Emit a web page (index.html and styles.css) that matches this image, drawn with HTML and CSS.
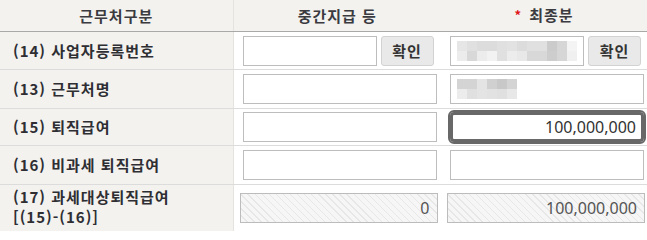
FILE: index.html
```html
<!DOCTYPE html>
<html lang="ko">
<head>
<meta charset="utf-8">
<link rel="stylesheet" href="styles.css">
</head>
<body>
<table class="grid">
  <colgroup><col class="c1"><col class="c2"><col class="c3"></colgroup>
  <thead>
    <tr class="head">
      <th class="lab">근무처구분</th>
      <th>중간지급 등</th>
      <th><span class="req">*</span> 최종분</th>
    </tr>
  </thead>
  <tbody>
    <tr class="r1">
      <td class="lab">(14) 사업자등록번호</td>
      <td class="cell"><div class="pair"><input class="fld short" type="text"><button class="btn" type="button">확인</button></div></td>
      <td class="cell"><div class="pair"><div class="fld short mosaic-box">
        <svg class="mosaic" width="120" height="20" viewBox="0 0 120 20">
          <rect x="0" y="0" width="10" height="10" fill="#e6e6e6"/><rect x="10" y="0" width="10" height="10" fill="#e0e0e0"/><rect x="20" y="0" width="10" height="10" fill="#dcdcdc"/><rect x="30" y="0" width="10" height="10" fill="#dcdcdc"/><rect x="40" y="0" width="10" height="10" fill="#e0e0e0"/><rect x="50" y="0" width="10" height="10" fill="#e2e2e2"/><rect x="60" y="0" width="10" height="10" fill="#dcdcdc"/><rect x="70" y="0" width="10" height="10" fill="#e0e0e0"/><rect x="80" y="0" width="10" height="10" fill="#e0e0e0"/><rect x="90" y="0" width="10" height="10" fill="#cbcbcb"/><rect x="100" y="0" width="10" height="10" fill="#d6d6d6"/><rect x="110" y="0" width="10" height="10" fill="#f4f4f4"/>
          <rect x="0" y="10" width="10" height="10" fill="#ececec"/><rect x="10" y="10" width="10" height="10" fill="#d8d8d8"/><rect x="20" y="10" width="10" height="10" fill="#ececec"/><rect x="30" y="10" width="10" height="10" fill="#f2f2f2"/><rect x="40" y="10" width="10" height="10" fill="#e0e0e0"/><rect x="50" y="10" width="10" height="10" fill="#ececec"/><rect x="60" y="10" width="10" height="10" fill="#e8e8e8"/><rect x="70" y="10" width="10" height="10" fill="#d8d8d8"/><rect x="80" y="10" width="10" height="10" fill="#d8d8d8"/><rect x="90" y="10" width="10" height="10" fill="#cdcdcd"/><rect x="100" y="10" width="10" height="10" fill="#d6d6d6"/><rect x="110" y="10" width="10" height="10" fill="#f0f0f0"/>
        </svg>
      </div><button class="btn" type="button">확인</button></div></td>
    </tr>
    <tr class="r2">
      <td class="lab">(13) 근무처명</td>
      <td class="cell"><input class="fld wide" type="text"></td>
      <td class="cell"><div class="fld wide mosaic-box">
        <svg class="mosaic" width="60" height="20" viewBox="0 0 60 20">
          <rect x="0" y="0" width="10" height="10" fill="#d4d4d4"/><rect x="10" y="0" width="10" height="10" fill="#d4d4d4"/><rect x="20" y="0" width="10" height="10" fill="#e4e4e4"/><rect x="30" y="0" width="10" height="10" fill="#d0d0d0"/><rect x="40" y="0" width="10" height="10" fill="#c8c8c8"/><rect x="50" y="0" width="10" height="10" fill="#d4d4d4"/>
          <rect x="0" y="10" width="10" height="10" fill="#ececec"/><rect x="10" y="10" width="10" height="10" fill="#e0e0e0"/><rect x="20" y="10" width="10" height="10" fill="#e4e4e4"/><rect x="30" y="10" width="10" height="10" fill="#e2e2e2"/><rect x="40" y="10" width="10" height="10" fill="#e0e0e0"/><rect x="50" y="10" width="10" height="10" fill="#e8e8e8"/>
        </svg>
      </div></td>
    </tr>
    <tr class="r3">
      <td class="lab">(15) 퇴직급여</td>
      <td class="cell"><input class="fld wide" type="text"></td>
      <td class="cell"><input class="fld wide focus num" type="text" value="100,000,000"></td>
    </tr>
    <tr class="r4">
      <td class="lab">(16) 비과세 퇴직급여</td>
      <td class="cell"><input class="fld wide" type="text"></td>
      <td class="cell"><input class="fld wide" type="text"></td>
    </tr>
    <tr class="r5">
      <td class="lab two"><div class="ln">(17) 과세대상퇴직급여</div><div class="ln">[(15)-(16)]</div></td>
      <td class="cell dis-cell"><input class="fld dis num" type="text" value="0" disabled></td>
      <td class="cell dis-cell"><input class="fld dis num" type="text" value="100,000,000" disabled></td>
    </tr>
  </tbody>
</table>
</body>
</html>
```

FILE: styles.css
```css
html, body {
  margin: 0;
  padding: 0;
  background: #ffffff;
}
body {
  font-family: "Noto Sans CJK KR", "Noto Sans", sans-serif;
  color: #333333;
  overflow: hidden;
}
.grid {
  width: 647px;
  table-layout: fixed;
  border-collapse: collapse;
  border-spacing: 0;
}
.c1 { width: 233px; }
.c2 { width: 208px; }
.c3 { width: 206px; }

.head th {
  height: 31px;
  padding: 0;
  background: #f3f2ef;
  border-bottom: 1px solid #a9a9a9;
  font-size: 15px;
  font-weight: 700;
  letter-spacing: 1px;
  color: #3a3a3f;
  text-align: center;
  vertical-align: middle;
  line-height: 18px;
}
.head th.lab {
  border-right: 1px solid #e4e3e0;
}
.req {
  color: #e0121b;
  font-size: 13px;
  position: relative;
  top: -1px;
  margin-right: 2px;
}
tbody td {
  padding: 0;
  border-bottom: 1px solid #dcdcdc;
  vertical-align: middle;
}
td.lab {
  background: #f3f2ef;
  border-right: 1px solid #e4e3e0;
  padding-left: 13px;
  font-size: 15px;
  font-weight: 700;
  letter-spacing: 1px;
  color: #2e2e33;
  line-height: 16px;
  white-space: nowrap;
}
td.lab.two {
  vertical-align: top;
  padding-top: 2px;
}
.ln {
  line-height: 20px;
  height: 20px;
}
.r1 td { height: 37px; }
.r2 td { height: 38px; }
.r3 td { height: 36px; }
.r4 td { height: 38px; }
.r5 td { height: 44px; border-bottom: none; }

.cell {
  padding: 0 5px 0 9px;
}
.dis-cell {
  padding: 0 2px 0 6px;
}
.pair {
  display: flex;
  align-items: center;
  gap: 4px;
}
.fld {
  box-sizing: border-box;
  height: 30px;
  border: 1px solid #bdbdbd;
  background: #ffffff;
  margin: 0;
  padding: 0 7px;
  font-family: "Noto Sans", "Noto Sans CJK KR", sans-serif;
  font-size: 16px;
  color: #333333;
  outline: none;
  display: block;
}
.short { width: 134px; }
.wide { width: 194px; }
.num { text-align: right; }
.mosaic-box {
  display: flex;
  align-items: center;
  padding: 0 0 0 6px;
}
.mosaic { display: block; }
.btn {
  box-sizing: border-box;
  width: 53px;
  height: 30px;
  margin: 0;
  padding: 0;
  border: 1px solid #d2d2d2;
  border-radius: 3px;
  background: #e9e9e9;
  font-family: "Noto Sans CJK KR", sans-serif;
  font-size: 15px;
  font-weight: 700;
  letter-spacing: 1px;
  color: #333333;
  line-height: 28px;
}
.focus {
  border: 3px solid #686868;
  outline: 2px solid #686868;
  border-radius: 4px;
  padding: 0 5px;
}
.dis {
  width: 198px;
  height: 30px;
  border: 1px solid #bcbcbc;
  background-color: #f6f6f6;
  background-image: repeating-linear-gradient(45deg, #f6f6f6 0px, #f6f6f6 4px, #e7e7e7 4px, #e7e7e7 5px);
  color: #555555;
  -webkit-text-fill-color: #555555;
  opacity: 1;
}
```
